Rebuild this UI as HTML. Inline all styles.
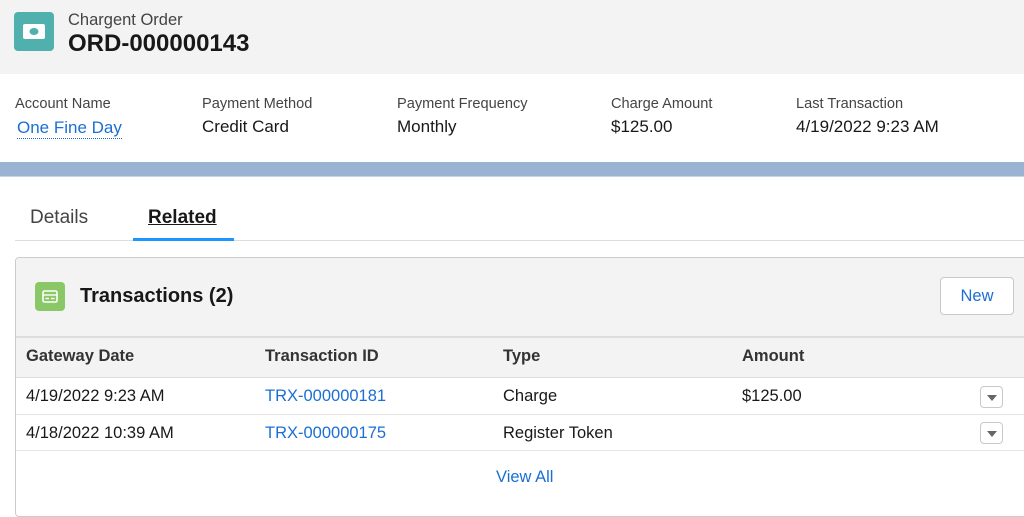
<!DOCTYPE html>
<html><head><style>
*{margin:0;padding:0;box-sizing:border-box}
body{width:1024px;height:504px;overflow:hidden;background:#fff;font-family:"Liberation Sans",sans-serif;color:#181818;position:relative}
.a{position:absolute;white-space:nowrap}
.lbl{font-size:14.6px;color:#444}
.val{font-size:17px;color:#181818}
.th{font-size:16.5px;font-weight:bold;color:#333}
.td{font-size:16.5px;color:#181818}
.dd{position:absolute;width:23px;height:22px;border:1px solid #c9c9c9;border-radius:4px;background:#fff}
.dd:after{content:"";position:absolute;left:6px;top:8px;border-left:5px solid transparent;border-right:5px solid transparent;border-top:6px solid #666}
</style></head><body>
<div class="a" style="left:0;top:0;width:1024px;height:74px;background:#f3f3f3"></div>
<div class="a" style="left:14px;top:12px;width:40px;height:39px;background:#4fb0ae;border-radius:4px">
<svg width="40" height="39" viewBox="0 0 40 39"><rect x="9" y="12" width="22" height="15" rx="2" fill="#fff"/><ellipse cx="20" cy="19.5" rx="4.5" ry="3.5" fill="#4fb0ae"/></svg></div>
<div class="a" style="left:68px;top:11px;font-size:16.5px;color:#444">Chargent Order</div>
<div class="a" style="left:68px;top:30px;font-size:24px;font-weight:bold">ORD-000000143</div>
<div class="a lbl" style="left:15px;top:96px">Account Name</div>
<div class="a val" style="left:17px;top:118px;color:#1b6fd3;border-bottom:1px dotted #1b6fd3">One Fine Day</div>
<div class="a lbl" style="left:202px;top:96px">Payment Method</div>
<div class="a val" style="left:202px;top:117px">Credit Card</div>
<div class="a lbl" style="left:397px;top:96px">Payment Frequency</div>
<div class="a val" style="left:397px;top:117px">Monthly</div>
<div class="a lbl" style="left:611px;top:96px">Charge Amount</div>
<div class="a val" style="left:611px;top:117px">$125.00</div>
<div class="a lbl" style="left:796px;top:96px">Last Transaction</div>
<div class="a val" style="left:796px;top:117px">4/19/2022 9:23 AM</div>
<div class="a" style="left:0;top:162px;width:1024px;height:15px;background:#9bb3d2;border-bottom:1px solid #c9d3e0"></div>
<div class="a" style="left:30px;top:207px;font-size:19px;color:#444">Details</div>
<div class="a" style="left:148px;top:207px;font-size:19px;font-weight:bold;text-decoration:underline">Related</div>
<div class="a" style="left:15px;top:240px;width:1009px;height:1px;background:#ddd"></div>
<div class="a" style="left:133px;top:238px;width:101px;height:3px;background:#1b96ff"></div>
<div class="a" style="left:15px;top:257px;width:1020px;height:260px;border:1px solid #ccc;border-radius:4px;background:#fff;overflow:hidden">
<div class="a" style="left:0;top:0;width:1020px;height:120px;background:#f3f3f3"></div>
<div class="a" style="left:0;top:78px;width:1020px;height:2px;background:#ddd"></div>
<div class="a" style="left:0;top:119px;width:1020px;height:1px;background:#ddd"></div>
<div class="a" style="left:0;top:156px;width:1020px;height:1px;background:#e5e5e5"></div>
<div class="a" style="left:0;top:192px;width:1020px;height:1px;background:#e5e5e5"></div>
</div>
<div class="a" style="left:35px;top:282px;width:30px;height:29px;background:#8ac867;border-radius:4px">
<svg width="30" height="29"><rect x="8" y="9" width="14" height="11" rx="1.5" fill="none" stroke="#fff" stroke-width="1.6"/><line x1="8" y1="13" x2="22" y2="13" stroke="#fff" stroke-width="1.4"/><line x1="10.5" y1="16.5" x2="14" y2="16.5" stroke="#fff" stroke-width="1.4"/><line x1="16" y1="16.5" x2="19.5" y2="16.5" stroke="#fff" stroke-width="1.4"/></svg></div>
<div class="a" style="left:80px;top:285px;font-size:20px;font-weight:bold">Transactions (2)</div>
<div class="a" style="left:940px;top:277px;width:74px;height:38px;border:1px solid #c9c9c9;border-radius:4px;background:#fff;color:#1b6fd3;font-size:16.5px;text-align:center;line-height:36px">New</div>
<div class="a th" style="left:26px;top:347px">Gateway Date</div>
<div class="a th" style="left:265px;top:347px">Transaction ID</div>
<div class="a th" style="left:503px;top:347px">Type</div>
<div class="a th" style="left:742px;top:347px">Amount</div>
<div class="a td" style="left:26px;top:387px">4/19/2022 9:23 AM</div>
<div class="a td" style="left:265px;top:387px;color:#1b6fd3">TRX-000000181</div>
<div class="a td" style="left:503px;top:387px">Charge</div>
<div class="a td" style="left:742px;top:387px">$125.00</div>
<div class="dd" style="left:980px;top:386px"></div>
<div class="a td" style="left:26px;top:424px">4/18/2022 10:39 AM</div>
<div class="a td" style="left:265px;top:424px;color:#1b6fd3">TRX-000000175</div>
<div class="a td" style="left:503px;top:424px">Register Token</div>
<div class="dd" style="left:980px;top:422px"></div>
<div class="a td" style="left:496px;top:468px;color:#1b6fd3">View All</div>
</body></html>
